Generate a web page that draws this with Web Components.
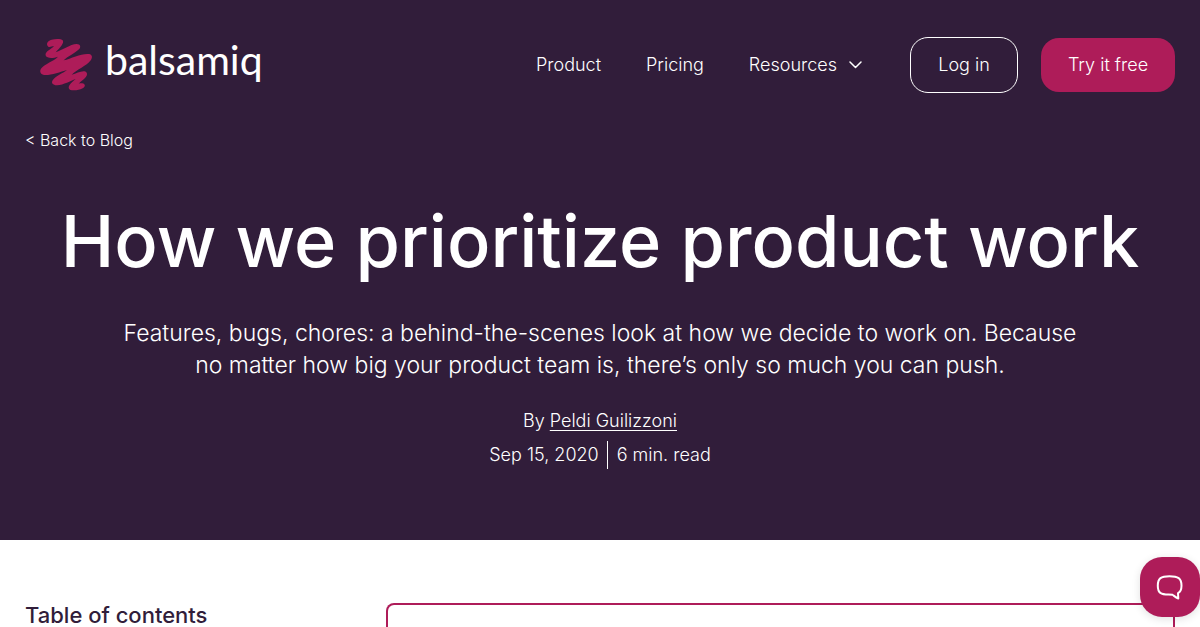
<!DOCTYPE html>
<html lang="en">
<head>
<meta charset="utf-8">
<meta name="viewport" content="width=device-width, initial-scale=1">
<title>How we prioritize product work</title>
<style>
  :root { --plum: #311d3a; --berry: #ae1c59; --gutter: 25px; }
  body { margin: 0; background: #fff; color: #fff; font-family: "Inter", "Liberation Sans", sans-serif; font-weight: 300; }
</style>
</head>
<body>
<blog-page></blog-page>
<script>
const define = (name, html) => customElements.define(name, class extends HTMLElement {
  constructor() {
    super();
    const t = document.createElement('template');
    t.innerHTML = html;
    this.attachShadow({ mode: 'open' }).append(t.content.cloneNode(true));
  }
});

define('brand-logo', `
<style>
  :host { display: block; }
  a { display: flex; align-items: center; gap: 12px; color: #fff; text-decoration: none; }
  svg { width: 54px; height: 54px; display: block; }
  span { font: 400 41px/44px "Lato", sans-serif; padding-bottom: 10px; }
</style>
<a href="#" aria-label="balsamiq home">
  <svg viewBox="27 24 162 162" aria-hidden="true"><path fill="#ae1c59" d="M55 50C47 43 52 32 65 29C77 26 94 26 98 31C104 39 89 54 77 67C98 60 120 43 140 42C151 42 154 51 147 58C135 69 114 79 101 91C125 85 156 69 177 72C188 74 188 84 181 92C168 108 142 117 125 134C139 131 151 123 163 124C173 126 173 135 167 142C161 149 152 155 146 161C152 159 161 159 164 164C168 173 151 180 132 181C119 182 114 176 117 168C121 159 130 153 137 147C121 152 102 165 81 166C68 166 63 159 68 151C77 138 98 130 111 120C90 126 61 137 42 135C30 133 28 123 34 115C45 101 70 94 84 80C74 83 62 86 53 82C43 77 46 68 54 62C62 57 68 53 72 48C66 49 59 52 55 50Z"/></svg>
  <span>balsamiq</span>
</a>`);

define('nav-link', `
<style>
  :host { display: block; }
  a { display: flex; align-items: center; gap: 12px; color: inherit; text-decoration: none; font-size: 18px; line-height: 28px; }
</style>
<a href="#"><slot></slot><slot name="icon"></slot></a>`);

define('pill-button', `
<style>
  :host { display: block; }
  button { box-sizing: border-box; width: 100%; height: 100%; padding: 0; border: 0; border-radius: 18px; background: #ae1c59; color: #fff; font: inherit; font-size: 18px; line-height: 28px; cursor: pointer; }
  :host([outline]) button { background: transparent; border: 1px solid #fff; }
</style>
<button type="button"><slot></slot></button>`);

define('site-header', `
<style>
  :host { display: flex; align-items: center; justify-content: space-between; padding: 37px var(--gutter) 0 39px; }
  nav { display: flex; align-items: center; gap: 45px; }
  .right, .actions { display: flex; align-items: center; }
  .right { gap: 48px; }
  .actions { gap: 23px; }
  .login { width: 108px; height: 56px; }
  .try { width: 134px; height: 54px; }
  svg { display: block; width: 13px; height: 8px; }
</style>
<brand-logo></brand-logo>
<div class="right">
  <nav aria-label="Main">
    <nav-link>Product</nav-link>
    <nav-link>Pricing</nav-link>
    <nav-link>Resources<svg slot="icon" viewBox="0 0 13 8" fill="none" stroke="#fff" stroke-width="1.5" stroke-linecap="round" stroke-linejoin="round"><path d="M1 1l5.500 5.500L12 1"/></svg></nav-link>
  </nav>
  <div class="actions">
    <pill-button class="login" outline>Log in</pill-button>
    <pill-button class="try">Try it free</pill-button>
  </div>
</div>`);

define('article-hero', `
<style>
  :host { display: block; padding: 35px var(--gutter) 71px; text-align: center; }
  .back { display: block; width: max-content; color: inherit; text-decoration: none; font-size: 16px; line-height: 24px; }
  h1 { margin: 44px 0 0; font-size: 72px; line-height: 90px; font-weight: 500; }
  p { margin: 31px auto 0; max-width: 970px; font-size: 23px; line-height: 32px; }
  .by { margin-top: 26px; font-size: 18px; line-height: 28px; }
  .by a { color: inherit; text-underline-offset: 3px; }
  .meta { display: flex; justify-content: center; margin-top: 6px; font-size: 18px; line-height: 28px; }
  .meta span + span { border-left: 1px solid #fff; margin-left: 8px; padding-left: 9px; }
</style>
<a class="back" href="#">&lt; Back to Blog</a>
<h1>How we prioritize product work</h1>
<p>Features, bugs, chores: a behind-the-scenes look at how we decide to work on. Because no matter how big your product team is, there’s only so much you can push.</p>
<div class="by">By <a href="#">Peldi Guilizzoni</a></div>
<div class="meta"><span>Sep 15, 2020</span><span>6 min. read</span></div>`);

define('article-body', `
<style>
  :host { display: grid; grid-template-columns: 337px 1fr; gap: 24px; padding: 63px var(--gutter) 0; color: var(--plum); }
  h2 { margin: 0; font-size: 22px; line-height: 24px; font-weight: 500; }
  section { border: 2px solid var(--berry); border-bottom: 0; border-radius: 8px 8px 0 0; }
</style>
<aside><h2>Table of contents</h2></aside>
<section></section>`);

define('chat-launcher', `
<style>
  :host { position: fixed; right: 0; bottom: 10px; }
  button { display: grid; place-items: center; width: 60px; height: 60px; padding: 0; border: 0; border-radius: 22px; background: var(--berry); box-shadow: 0 2px 8px rgba(0,0,0,.12); cursor: pointer; }
  svg { display: block; width: 28px; height: 28px; }
</style>
<button type="button" aria-label="Open chat"><svg viewBox="0 0 28 28" fill="none" stroke="#fff" stroke-width="2" stroke-linejoin="round"><path d="M13.500 3.200C5 3.200 1.800 5.200 1.800 12.700C1.800 20 5 21.500 12.500 21.500C14 21.500 15.300 21.500 16.500 21.700C18 22.800 20 24.800 22.300 25.500L22 20.200C24.700 18.700 25.500 16.500 25.500 12.700C25.500 5.200 22 3.200 13.500 3.200Z"/></svg></button>`);

define('blog-page', `
<style>
  :host { display: block; }
  .top { background: var(--plum); }
  main { display: block; }
</style>
<div class="top"><site-header></site-header><article-hero></article-hero></div>
<main><article-body></article-body></main>
<chat-launcher></chat-launcher>`);
</script>
</body>
</html>
